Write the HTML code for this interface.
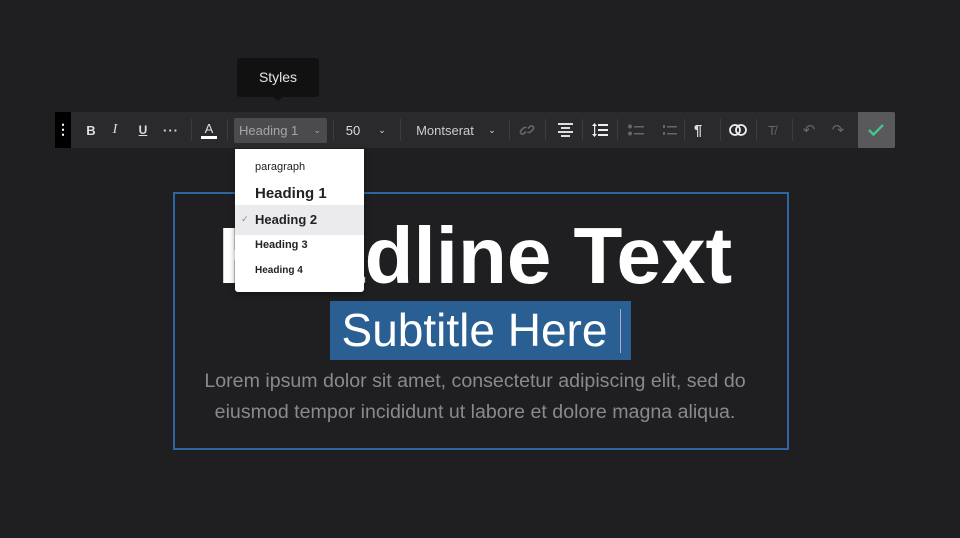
<!DOCTYPE html>
<html><head><meta charset="utf-8"><style>
*{margin:0;padding:0;box-sizing:border-box}
body{width:960px;height:538px;background:#1f1f21;font-family:"Liberation Sans",sans-serif;position:relative;overflow:hidden}
.a{position:absolute}
.tb{left:55px;top:112px;width:840px;height:36px;background:#2a2a2c;border-radius:2px}
.div{position:absolute;top:7px;width:1px;height:22px;background:#3c3c3e}
.ic{position:absolute;top:0;height:36px;display:flex;align-items:center;justify-content:center;color:#ddd;font-size:13px}
.dim{color:#666}
</style></head><body>
<div class="a" style="left:237px;top:58px;width:82px;height:39px;background:#111;border-radius:3px;color:#e6e6e6;font-size:14px;text-align:center;line-height:39px">Styles</div>
<div class="a" style="left:272px;top:96px;width:0;height:0;border-left:6px solid transparent;border-right:6px solid transparent;border-top:5px solid #111"></div>

<div class="a" style="left:173px;top:192px;width:616px;height:258px;border:2px solid #2c67a0"></div>
<div class="a" style="left:0;width:950px;top:206px;text-align:center;color:#fff;font-weight:bold;font-size:80px;line-height:100px">Headline Text</div>
<div class="a" style="left:330px;top:301px;width:301px;height:59px;background:#2a5f94"></div>
<div class="a" style="left:620px;top:309px;width:1px;height:44px;background:#aac"></div>
<div class="a" style="left:337px;top:301px;width:275px;text-align:center;color:#fff;font-size:46px;line-height:59px">Subtitle Here</div>
<div class="a" style="left:155px;width:640px;top:366px;text-align:center;color:#8a8a8c;font-size:19.6px;line-height:31px">Lorem ipsum dolor sit amet, consectetur adipiscing elit, sed do<br>eiusmod tempor incididunt ut labore et dolore magna aliqua.</div>

<div class="a tb">
 <div class="a" style="left:0;top:0;width:16px;height:36px;background:#000;color:#fff;font-weight:bold;font-size:14px;text-align:center;line-height:34px">⋮</div>
 <div class="ic" style="left:28px;width:16px;font-weight:bold">B</div>
 <div class="ic" style="left:52px;width:16px;font-style:italic;font-family:'Liberation Serif',serif;font-size:14px">I</div>
 <div class="ic" style="left:80px;width:16px;text-decoration:underline;font-size:12px;font-weight:bold">U</div>
 <div class="ic" style="left:106px;width:20px;font-weight:bold;letter-spacing:1px">···</div>
 <div class="div" style="left:136px"></div>
 <div class="ic" style="left:145px;width:18px;flex-direction:column"><span style="font-size:13px;line-height:13px">A</span><span style="display:block;width:16px;height:3px;background:#fff;margin-top:1px"></span></div>
 <div class="div" style="left:172px"></div>
 <div class="a" style="left:179px;top:6px;width:93px;height:25px;background:#4b4b4d;border-radius:2px;color:#a6a6a6;font-size:13px;line-height:25px;padding-left:5px">Heading 1<span style="position:absolute;right:6px;font-size:9px">⌄</span></div>
 <div class="div" style="left:278px"></div>
 <div class="ic" style="left:291px;width:14px;font-size:13px">50</div>
 <div class="ic" style="left:322px;width:10px;font-size:9px">⌄</div>
 <div class="div" style="left:345px"></div>
 <div class="ic" style="left:362px;width:56px;font-size:13px;color:#ccc">Montserat</div>
 <div class="ic" style="left:432px;width:10px;font-size:9px">⌄</div>
 <div class="div" style="left:454px"></div>
 <svg class="a" style="left:464px;top:10px" width="16" height="16" viewBox="0 0 16 16" fill="none" stroke="#666" stroke-width="1.6"><path d="M7 9.5l-2 2a2.1 2.1 0 01-3-3l2.5-2.5a2.1 2.1 0 013 0M9 6.5l2-2a2.1 2.1 0 013 3l-2.5 2.5a2.1 2.1 0 01-3 0"/></svg>
 <div class="div" style="left:490px"></div>
 <svg class="a" style="left:503px;top:11px" width="15" height="14" fill="#ddd"><rect x="0" y="0" width="15" height="2"/><rect x="3" y="4" width="9" height="2"/><rect x="0" y="8" width="15" height="2"/><rect x="3" y="12" width="9" height="2"/></svg>
 <div class="div" style="left:527px"></div>
 <svg class="a" style="left:537px;top:11px" width="16" height="14" fill="#eee"><rect x="6" y="1" width="10" height="2"/><rect x="6" y="6" width="10" height="2"/><rect x="6" y="11" width="10" height="2"/><path d="M2.5 0l2.5 3H0zM2.5 14l2.5-3H0z"/><rect x="2" y="2" width="1.2" height="10"/></svg>
 <div class="div" style="left:562px"></div>
 <svg class="a" style="left:573px;top:12px" width="16" height="12" fill="#666"><circle cx="2" cy="2.5" r="2"/><circle cx="2" cy="9.5" r="2"/><rect x="6" y="2" width="10" height="1.5"/><rect x="6" y="9" width="10" height="1.5"/></svg>
 <svg class="a" style="left:608px;top:12px" width="14" height="12" fill="#666"><rect x="0" y="1" width="2" height="3"/><rect x="0" y="8" width="2" height="3"/><rect x="4" y="2" width="10" height="1.5"/><rect x="4" y="9" width="10" height="1.5"/></svg>
 <div class="div" style="left:629px"></div>
 <div class="ic" style="left:636px;width:14px;font-size:15px;font-weight:bold">¶</div>
 <div class="div" style="left:665px"></div>
 <svg class="a" style="left:674px;top:11px" width="18" height="14" fill="none" stroke="#eee" stroke-width="1.8"><circle cx="6" cy="7" r="5"/><circle cx="12" cy="7" r="5"/></svg>
 <div class="div" style="left:701px"></div>
 <div class="ic dim" style="left:710px;width:14px;font-size:13px">T̸</div>
 <div class="div" style="left:737px"></div>
 <div class="ic dim" style="left:746px;width:16px;font-size:15px">↶</div>
 <div class="ic dim" style="left:775px;width:16px;font-size:15px">↷</div>
 <div class="a" style="left:803px;top:0;width:37px;height:36px;background:#59595b;border-radius:0 2px 2px 0"></div>
 <svg class="a" style="left:813px;top:11px" width="16" height="14" fill="none" stroke="#3fc88a" stroke-width="2.4"><path d="M1 7l4.5 4.5L15 2"/></svg>
</div>

<div class="a" style="left:235px;top:149px;width:129px;height:143px;background:#fff;border-radius:0 0 3px 3px;box-shadow:0 2px 6px rgba(0,0,0,.4)">
 <div class="a" style="left:20px;top:12px;font-size:11px;color:#222">paragraph</div>
 <div class="a" style="left:20px;top:36px;font-size:15px;font-weight:bold;color:#222">Heading 1</div>
 <div class="a" style="left:0;top:56px;width:129px;height:30px;background:#ebebee"></div>
 <div class="a" style="left:6px;top:65px;font-size:9px;color:#888">✓</div>
 <div class="a" style="left:20px;top:63px;font-size:13px;font-weight:bold;color:#222">Heading 2</div>
 <div class="a" style="left:20px;top:90px;font-size:11px;font-weight:bold;color:#222">Heading 3</div>
 <div class="a" style="left:20px;top:116px;font-size:10px;font-weight:bold;color:#222">Heading 4</div>
</div>
</body></html>
